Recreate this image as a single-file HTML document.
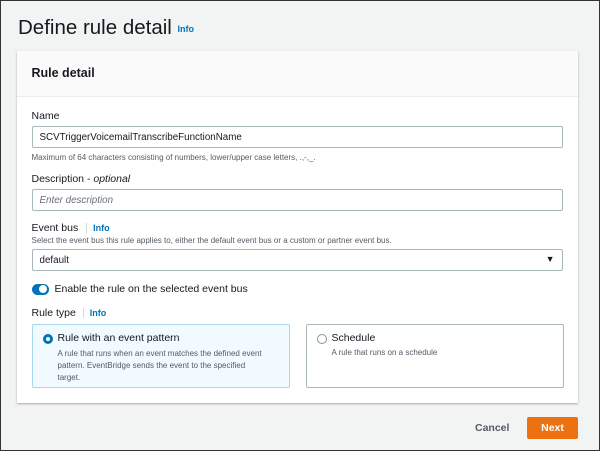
<!DOCTYPE html>
<html><head><style>
*{box-sizing:border-box;margin:0;padding:0}
body{width:600px;height:451px;background:#f2f3f3;font-family:"Liberation Sans",sans-serif;color:#16191f;position:relative;overflow:hidden;border:1.5px solid #333}
.a{position:absolute}
.t{font-size:20.5px;left:17px;top:15px;color:#16191f}
.info{color:#0073bb;font-weight:bold;font-size:9px}
.card{left:15.5px;top:49.5px;width:561px;height:352px;background:#fff;box-shadow:0 1px 2px rgba(0,0,0,.3)}
.hd{left:0;top:0;width:100%;height:46px;background:#fafafa;border-bottom:1px solid #eaeded}
.lbl{font-size:10.5px;color:#16191f}
.hint{font-size:8px;color:#545b64}
.in{left:15px;width:531px;height:22px;border:1px solid #aab7b8;border-radius:2px;font-size:9.8px;padding:5px 7px}
.tile{border:1px solid #aab7b8;border-radius:2px;top:273px;height:64px;width:258px;background:#fff}
</style></head><body>
<div class="a t">Define rule detail <span class="info" style="font-size:9px;vertical-align:2px">Info</span></div>
<div class="a card">
 <div class="a hd"><div class="a" style="left:15px;top:15px;font-size:12.5px;font-weight:bold">Rule detail</div></div>
 <div class="a lbl" style="left:15px;top:59px">Name</div>
 <div class="a in" style="top:75px">SCVTriggerVoicemailTranscribeFunctionName</div>
 <div class="a hint" style="left:15px;top:102px">Maximum of 64 characters consisting of numbers, lower/upper case letters, .,-,_.</div>
 <div class="a lbl" style="left:15px;top:122px">Description - <i>optional</i></div>
 <div class="a in" style="top:138px;color:#687078;font-style:italic">Enter description</div>
 <div class="a lbl" style="left:15px;top:171px">Event bus <span style="border-left:1px solid #d5dbdb;margin:0 5px;padding-left:6px" class="info">Info</span></div>
 <div class="a hint" style="left:15px;top:185px">Select the event bus this rule applies to, either the default event bus or a custom or partner event bus.</div>
 <div class="a in" style="top:198px">default<span style="position:absolute;right:7px;top:4px;font-size:9px">&#9660;</span></div>
 <div class="a" style="left:15px;top:233px;width:17px;height:11px;border-radius:6px;background:#0073bb"><div class="a" style="right:1.5px;top:1.5px;width:8px;height:8px;border-radius:50%;background:#fff"></div></div>
 <div class="a lbl" style="left:38px;top:232px">Enable the rule on the selected event bus</div>
 <div class="a lbl" style="left:15px;top:256px">Rule type <span style="border-left:1px solid #d5dbdb;margin:0 4px;padding-left:6px" class="info">Info</span></div>
 <div class="a tile" style="left:15px;background:#f1faff;border-color:#a7d6ee">
  <div class="a" style="left:10px;top:9px;width:10px;height:10px;border-radius:50%;border:3px solid #0073bb;background:#fff"></div>
  <div class="a lbl" style="left:25px;top:7px">Rule with an event pattern</div>
  <div class="a hint" style="left:25px;top:23px;line-height:12px;width:210px">A rule that runs when an event matches the defined event pattern. EventBridge sends the event to the specified target.</div>
 </div>
 <div class="a tile" style="left:289px">
  <div class="a" style="left:10px;top:9px;width:10px;height:10px;border-radius:50%;border:1px solid #879596"></div>
  <div class="a lbl" style="left:25px;top:7px">Schedule</div>
  <div class="a hint" style="left:25px;top:23px">A rule that runs on a schedule</div>
 </div>
</div>
<div class="a" style="left:474px;top:421px;font-size:10.5px;font-weight:bold;color:#545b64">Cancel</div>
<div class="a" style="left:526px;top:416px;width:51px;height:22px;background:#ec7211;color:#fff;font-size:10.5px;font-weight:bold;text-align:center;line-height:22px;border-radius:2px">Next</div>
</body></html>
